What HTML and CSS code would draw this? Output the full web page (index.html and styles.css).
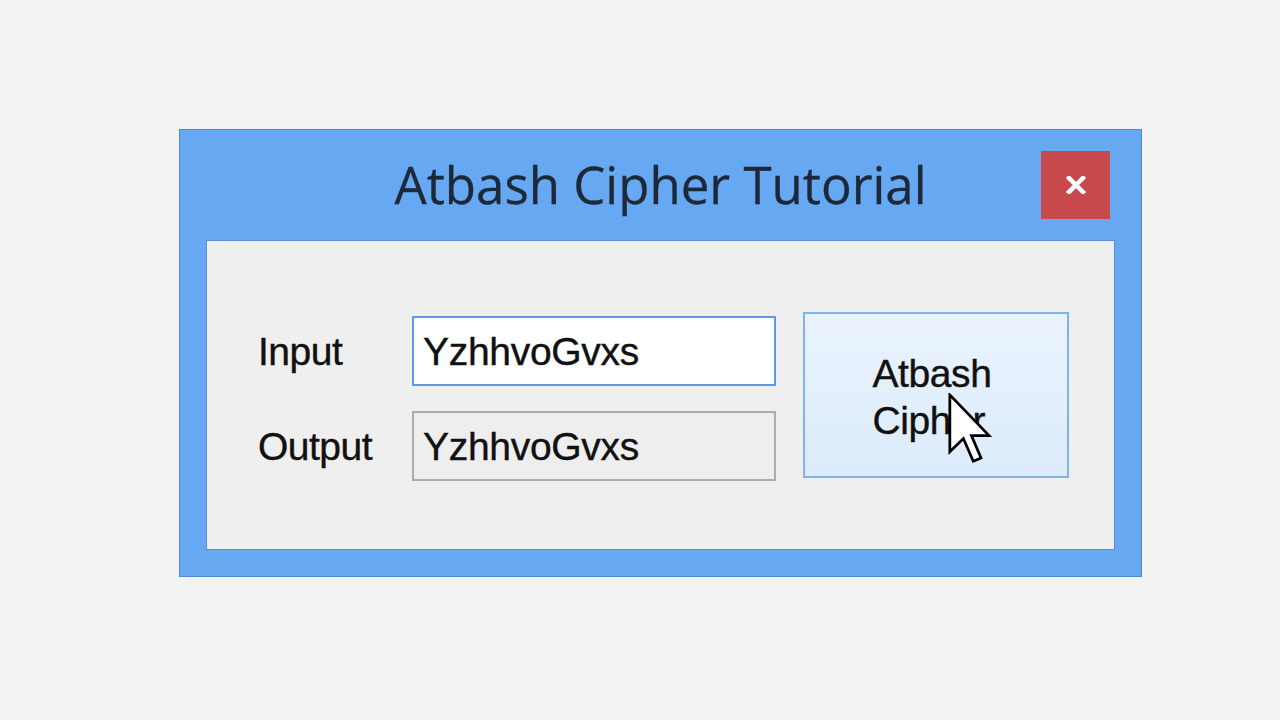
FILE: index.html
```html
<!DOCTYPE html>
<html>
<head>
<meta charset="utf-8">
<link rel="stylesheet" href="styles.css">
</head>
<body>
<div class="stage">
  <div class="window">
    <div class="titlebar">
      <div class="title">Atbash Cipher Tutorial</div>
      <div class="close">
        <svg width="20" height="18" viewBox="0 0 20 18"><path d="M3 2 L17 16 M17 2 L3 16" stroke="#fff" stroke-width="4.5" stroke-linecap="square"/></svg>
      </div>
    </div>
    <div class="client">
      <div class="form">
        <div class="label">Input</div>
        <div class="box box-input">YzhhvoGvxs</div>
        <div class="button">
          <span class="btn-text">Atbash<br>Cipher</span>
          <svg class="cursor" width="44" height="72" viewBox="0 0 12 19.6"><path d="M0.5 0.5 L0.5 16 L4.2 12.4 L6.9 18.6 L9 17.7 L6.4 11.6 L11.2 11.6 Z" fill="#fff" stroke="#000" stroke-width="0.75" stroke-linejoin="miter"/></svg>
        </div>
        <div class="label">Output</div>
        <div class="box box-output">YzhhvoGvxs</div>
      </div>
    </div>
  </div>
</div>
</body>
</html>
```

FILE: styles.css
```css
html, body {
  margin: 0;
  padding: 0;
  background: #f3f3f3;
  width: 1280px;
  height: 720px;
  overflow: hidden;
}
.stage {
  padding: 129px 0 0 179px;
}
.window {
  box-sizing: border-box;
  width: 963px;
  height: 448px;
  background: #67a8f2;
  border: 1px solid #4d88d2;
  display: flex;
  flex-direction: column;
}
.titlebar {
  position: relative;
  height: 110px;
  display: flex;
  justify-content: center;
  align-items: flex-start;
}
.title {
  font-family: "Open Sans", "Noto Sans", sans-serif;
  font-size: 51px;
  color: #1d2838;
  margin-top: 22px;
  line-height: 64px;
  letter-spacing: 0;
  -webkit-text-stroke: 0.3px #1d2838;
}
.close {
  position: absolute;
  top: 21px;
  right: 31px;
  width: 69px;
  height: 68px;
  background: #c8494b;
  display: flex;
  align-items: center;
  justify-content: center;
}
.client {
  box-sizing: border-box;
  margin: 0 26px;
  height: 310px;
  background: #efefef;
  border: 1px solid #5b90d4;
}
.form {
  display: grid;
  grid-template-columns: 127px 364px 266px;
  grid-template-rows: 70px 70px;
  column-gap: 27px;
  row-gap: 25px;
  padding: 75px 0 0 51px;
  font-family: "Liberation Sans", Arial, sans-serif;
  font-size: 39px;
  color: #111;
  -webkit-text-stroke: 0.4px #111;
}
.label {
  display: flex;
  align-items: center;
  letter-spacing: -0.5px;
  padding-top: 2px;
}
.box {
  box-sizing: border-box;
  display: flex;
  align-items: center;
  padding-left: 9px;
  padding-top: 2px;
  letter-spacing: -0.3px;
}
.box-input {
  background: #fff;
  border: 2px solid #5b9ae6;
}
.box-output {
  background: #eeeeee;
  border: 2px solid #acacac;
}
.button {
  position: relative;
  box-sizing: border-box;
  grid-column: 3;
  grid-row: 1 / span 2;
  height: 166px;
  margin-top: -4px;
  background: linear-gradient(#eaf3fd, #dcebfb);
  border: 2px solid #7fb3ea;
  display: flex;
  align-items: center;
  justify-content: center;
}
.btn-text {
  display: inline-block;
  text-align: left;
  line-height: 47px;
  margin-left: -8px;
  margin-top: 4px;
  letter-spacing: -0.4px;
}
.cursor {
  position: absolute;
  left: 143px;
  top: 79px;
  -webkit-text-stroke: 0;
}
```
